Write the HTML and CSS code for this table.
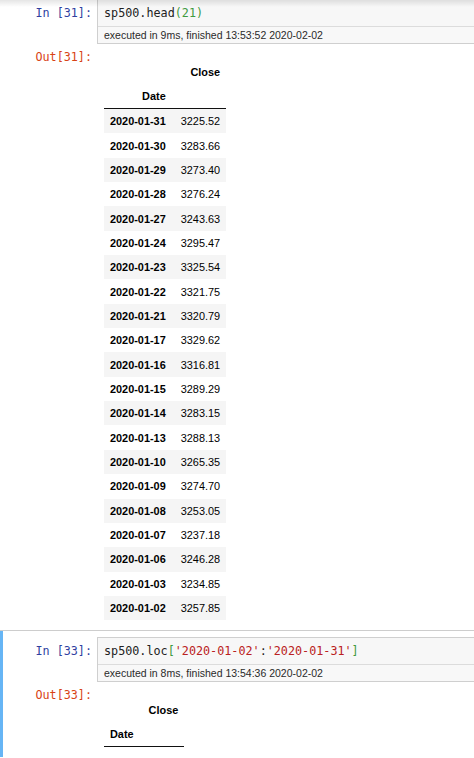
FILE: index.html
```html
<!DOCTYPE html>
<html>
<head>
<meta charset="utf-8">
<link rel="stylesheet" href="styles.css">
</head>
<body>
<div class="page">
  <div class="cell first">
    <div class="row">
      <div class="prompt in">In&nbsp;[31]:</div>
      <div class="inbox">
        <div class="code">sp500.head<span class="br">(</span><span class="num">21</span><span class="br">)</span></div>
        <div class="exec">executed in 9ms, finished 13:53:52 2020-02-02</div>
      </div>
    </div>
    <div class="row outrow">
      <div class="prompt out">Out[31]:</div>
      <div class="outarea">
        <table class="df">
          <thead>
            <tr><th class="idx"></th><th>Close</th></tr>
            <tr class="names"><th class="idx">Date</th><th></th></tr>
          </thead>
          <tbody>
            <tr><th class="idx">2020-01-31</th><td>3225.52</td></tr>
            <tr><th class="idx">2020-01-30</th><td>3283.66</td></tr>
            <tr><th class="idx">2020-01-29</th><td>3273.40</td></tr>
            <tr><th class="idx">2020-01-28</th><td>3276.24</td></tr>
            <tr><th class="idx">2020-01-27</th><td>3243.63</td></tr>
            <tr><th class="idx">2020-01-24</th><td>3295.47</td></tr>
            <tr><th class="idx">2020-01-23</th><td>3325.54</td></tr>
            <tr><th class="idx">2020-01-22</th><td>3321.75</td></tr>
            <tr><th class="idx">2020-01-21</th><td>3320.79</td></tr>
            <tr><th class="idx">2020-01-17</th><td>3329.62</td></tr>
            <tr><th class="idx">2020-01-16</th><td>3316.81</td></tr>
            <tr><th class="idx">2020-01-15</th><td>3289.29</td></tr>
            <tr><th class="idx">2020-01-14</th><td>3283.15</td></tr>
            <tr><th class="idx">2020-01-13</th><td>3288.13</td></tr>
            <tr><th class="idx">2020-01-10</th><td>3265.35</td></tr>
            <tr><th class="idx">2020-01-09</th><td>3274.70</td></tr>
            <tr><th class="idx">2020-01-08</th><td>3253.05</td></tr>
            <tr><th class="idx">2020-01-07</th><td>3237.18</td></tr>
            <tr><th class="idx">2020-01-06</th><td>3246.28</td></tr>
            <tr><th class="idx">2020-01-03</th><td>3234.85</td></tr>
            <tr><th class="idx">2020-01-02</th><td>3257.85</td></tr>
          </tbody>
        </table>
      </div>
    </div>
  </div>
  <div class="cell selected">
    <div class="row">
      <div class="prompt in">In&nbsp;[33]:</div>
      <div class="inbox">
        <div class="code">sp500.loc<span class="br">[</span><span class="str">'2020-01-02'</span>:<span class="str">'2020-01-31'</span><span class="br">]</span></div>
        <div class="exec">executed in 8ms, finished 13:54:36 2020-02-02</div>
      </div>
    </div>
    <div class="row outrow">
      <div class="prompt out">Out[33]:</div>
      <div class="outarea">
        <table class="df">
          <thead>
            <tr><th class="idx"></th><th>Close</th></tr>
            <tr class="names"><th class="idx">Date</th><th></th></tr>
          </thead>
        </table>
      </div>
    </div>
  </div>
</div>
</body>
</html>
```

FILE: styles.css
```css
html, body {
  margin: 0;
  padding: 0;
  overflow: hidden;
  background: #fff;
}

.page {
  position: relative;
  width: 100%;
  height: 758px;
  overflow: hidden;
}

.page::before {
  content: "";
  position: absolute;
  left: 0;
  top: 0;
  right: 0;
  height: 7px;
  background: linear-gradient(to bottom, rgba(0,0,0,0.10), rgba(0,0,0,0));
  z-index: 2;
}

.cell.first {
  margin-top: -1px;
}

.cell.selected {
  border-top: 1px solid #cdcdcd;
  box-shadow: inset 3px 0 0 #66b5f5;
  padding-top: 6px;
}

.row {
  display: flex;
  align-items: flex-start;
}

.prompt {
  flex: none;
  box-sizing: border-box;
  width: 97px;
  padding-right: 5px;
  text-align: right;
  font-family: "DejaVu Sans Mono", "Liberation Mono", monospace;
  font-size: 11.75px;
  white-space: nowrap;
}

.prompt.in {
  color: #303f9f;
  padding-top: 1px;
  line-height: 26px;
}

.prompt.out {
  color: #d84315;
  padding-top: 5px;
  line-height: 16px;
}

.inbox {
  flex: 1;
  min-width: 0;
  border: 1px solid #cfcfcf;
  border-right: none;
  background: #f7f7f7;
}

.code {
  height: 26px;
  line-height: 26px;
  padding-left: 6px;
  font-family: "DejaVu Sans Mono", "Liberation Mono", monospace;
  font-size: 11.75px;
  color: #222;
  white-space: pre;
}

.code .br { color: #3f9a3f; }
.code .num { color: #3f9a3f; }
.code .str { color: #ba2121; }

.exec {
  border-top: 1px solid #dcdcdc;
  height: 16px;
  line-height: 16px;
  padding-left: 6px;
  font-family: "Liberation Sans", Arial, sans-serif;
  font-size: 10.5px;
  color: #2a2a2a;
  background: #f8f8f8;
}

.outarea {
  padding: 16px 0 10px 7px;
}

.df {
  border-collapse: collapse;
  border-spacing: 0;
  font-family: "Liberation Sans", Arial, sans-serif;
  font-size: 10.9px;
  color: #000;
}

.df th, .df td {
  padding: 0 6px;
  height: 24px;
  text-align: right;
  vertical-align: middle;
  white-space: nowrap;
}

.df th {
  font-weight: bold;
}

.df th.idx {
  padding-right: 9px;
}

.df thead tr.names th {
  border-bottom: 1px solid #111;
}

.df tbody th, .df tbody td {
  height: 24.35px;
}

.df tbody tr:nth-child(odd) {
  background: #f5f5f5;
}
```
